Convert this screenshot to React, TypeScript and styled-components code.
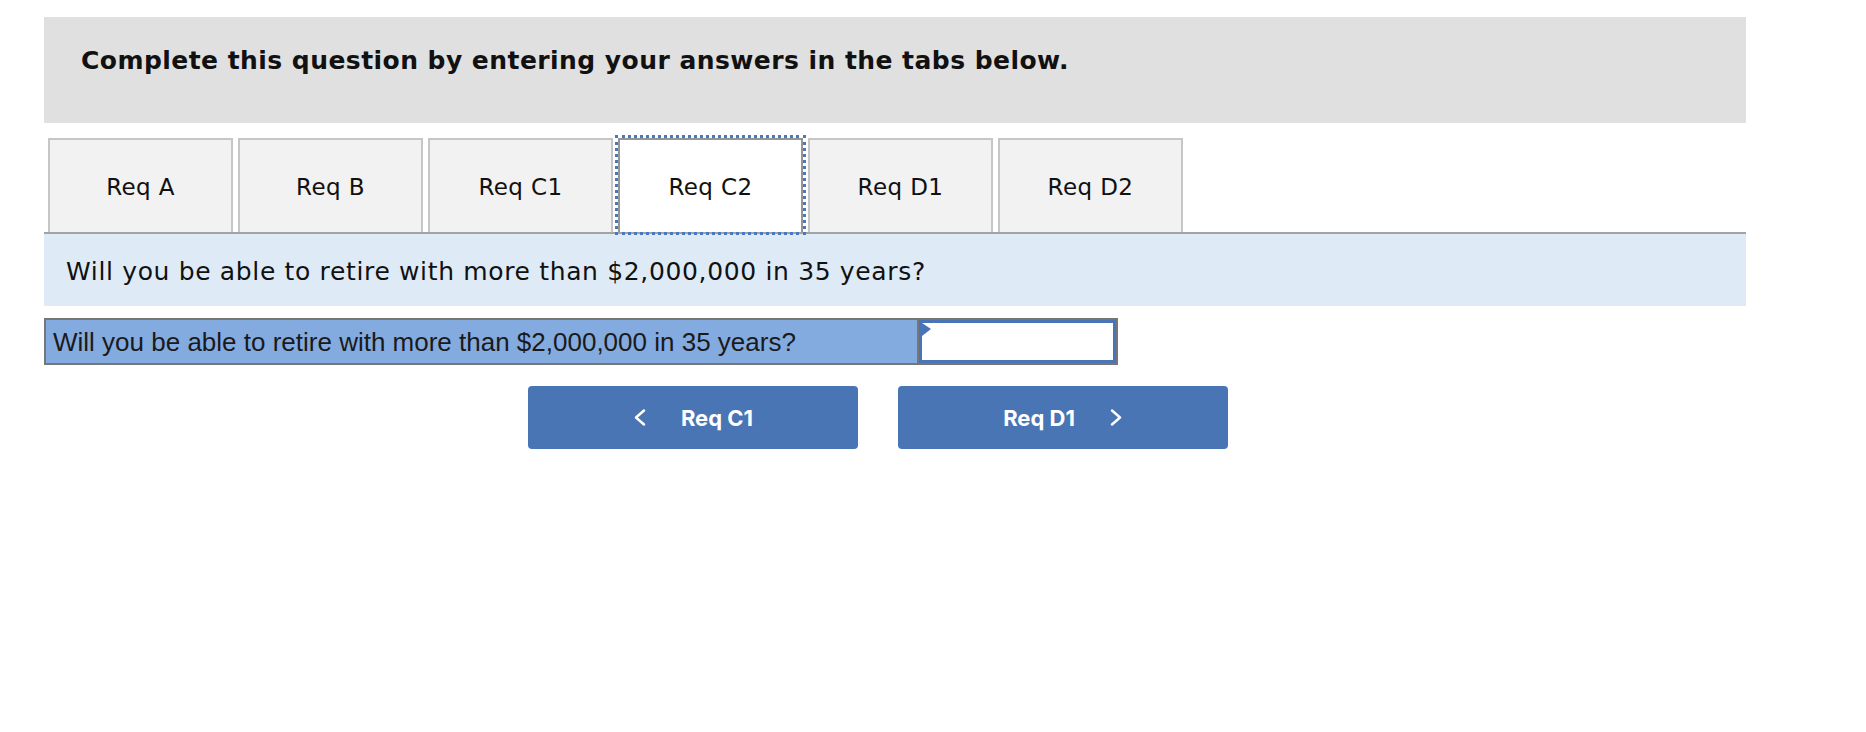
import styled, { createGlobalStyle } from "styled-components";

const GlobalStyle = createGlobalStyle`
  body {
    margin: 0;
    background: #ffffff;
    font-family: "DejaVu Sans", Verdana, sans-serif;
    color: #111111;
  }
`;

const Page = styled("div")({
  width: "1702px",
  padding: "17px 0 0 44px",
});

const Header = styled("div")({
  height: "106px",
  backgroundColor: "#e0e0e0",
  padding: "0 0 0 37px",
  boxSizing: "border-box",
  display: "flex",
  alignItems: "flex-start",
});

const HeaderText = styled("h1")({
  margin: "29px 0 0",
  fontSize: "25px",
  letterSpacing: "0.45px",
  lineHeight: "30px",
  fontWeight: 700,
  fontFamily: '"DejaVu Sans", Verdana, sans-serif',
});

const TabBar = styled("div")({
  marginTop: "15px",
  display: "flex",
  gap: "5px",
  paddingLeft: "4px",
  height: "96px",
  boxSizing: "border-box",
  borderBottom: "2px solid #a3a3a3",
});

const Tab = styled("div")<{ $active?: boolean }>(({ $active = false }) => ({
  width: "185px",
  height: "94px",
  boxSizing: "border-box",
  border: "2px solid #c6c6c6",
  borderBottom: "none",
  backgroundColor: "#f2f2f2",
  display: "flex",
  alignItems: "center",
  justifyContent: "center",
  paddingTop: "2px",
  fontSize: "23px",
  letterSpacing: "0.4px",
  color: "#111111",
  ...($active && {
    backgroundColor: "#ffffff",
    border: "2px solid #959595",
    borderBottom: "none",
    outline: "3px dotted #4b77c0",
    outlineOffset: "0px",
  }),
}));

const QuestionBar = styled("div")({
  height: "72px",
  backgroundColor: "#deebf7",
  display: "flex",
  alignItems: "center",
  paddingLeft: "22px",
  paddingTop: "2px",
  boxSizing: "border-box",
  fontSize: "25px",
  letterSpacing: "0.65px",
  color: "#111111",
});

const AnswerRow = styled("div")({
  marginTop: "12px",
  display: "flex",
  height: "47px",
});

const LabelCell = styled("div")({
  width: "873px",
  boxSizing: "border-box",
  border: "2px solid #767676",
  borderRight: "none",
  backgroundColor: "#84abdf",
  display: "flex",
  alignItems: "center",
  paddingLeft: "7px",
  paddingTop: "2px",
  fontFamily: '"Liberation Sans", Arial, sans-serif',
  fontSize: "26px",
  color: "#1a1a1a",
});

const InputCell = styled("div")({
  position: "relative",
  width: "201px",
  boxSizing: "border-box",
  border: "2px solid #767676",
  backgroundColor: "#ffffff",
  boxShadow: "inset 0 0 0 3px #4a74b8",
});

const CornerMark = styled("span")({
  position: "absolute",
  left: "3px",
  top: "3px",
  width: 0,
  height: 0,
  borderTop: "6px solid transparent",
  borderBottom: "7px solid transparent",
  borderLeft: "9px solid #4a74b8",
});

const NavRow = styled("div")({
  marginTop: "21px",
  marginLeft: "484px",
  display: "flex",
  gap: "40px",
});

const NavButton = styled("button")({
  width: "330px",
  height: "63px",
  border: "none",
  borderRadius: "4px",
  backgroundColor: "#4a75b4",
  color: "#ffffff",
  display: "flex",
  alignItems: "center",
  justifyContent: "center",
  gap: "35px",
  fontFamily: 'Inter, "Noto Sans", sans-serif',
  fontWeight: 700,
  fontSize: "22px",
  cursor: "pointer",
});

const Chevron = ({ dir }: { dir: "left" | "right" }) => (
  <svg width="13" height="17" viewBox="0 0 13 17" fill="none">
    <polyline
      points={dir === "left" ? "11,1.5 3,8.5 11,15.5" : "2,1.5 10,8.5 2,15.5"}
      stroke="#ffffff"
      strokeWidth="2.4"
      strokeLinecap="round"
      strokeLinejoin="round"
    />
  </svg>
);

const tabs = ["Req A", "Req B", "Req C1", "Req C2", "Req D1", "Req D2"];
const question = "Will you be able to retire with more than $2,000,000 in 35 years?";

const App = () => {
  return (
    <Page>
      <GlobalStyle />
      <Header>
        <HeaderText>Complete this question by entering your answers in the tabs below.</HeaderText>
      </Header>
      <TabBar>
        {tabs.map((t) => (
          <Tab key={t} $active={t === "Req C2"}>
            {t}
          </Tab>
        ))}
      </TabBar>
      <QuestionBar>{question}</QuestionBar>
      <AnswerRow>
        <LabelCell>{question}</LabelCell>
        <InputCell>
          <CornerMark />
        </InputCell>
      </AnswerRow>
      <NavRow>
        <NavButton>
          <Chevron dir="left" />
          <span>Req C1</span>
        </NavButton>
        <NavButton>
          <span>Req D1</span>
          <Chevron dir="right" />
        </NavButton>
      </NavRow>
    </Page>
  );
};

export default App;
